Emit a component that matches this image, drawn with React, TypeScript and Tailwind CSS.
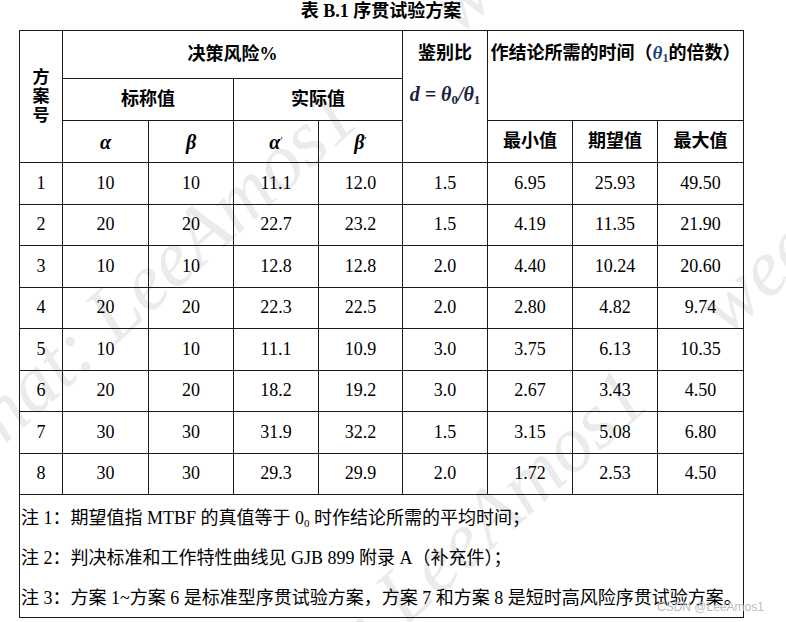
import React from 'react';

const rows = [
  ['1', '10', '10', '11.1', '12.0', '1.5', '6.95', '25.93', '49.50'],
  ['2', '20', '20', '22.7', '23.2', '1.5', '4.19', '11.35', '21.90'],
  ['3', '10', '10', '12.8', '12.8', '2.0', '4.40', '10.24', '20.60'],
  ['4', '20', '20', '22.3', '22.5', '2.0', '2.80', '4.82', '9.74'],
  ['5', '10', '10', '11.1', '10.9', '3.0', '3.75', '6.13', '10.35'],
  ['6', '20', '20', '18.2', '19.2', '3.0', '2.67', '3.43', '4.50'],
  ['7', '30', '30', '31.9', '32.2', '1.5', '3.15', '5.08', '6.80'],
  ['8', '30', '30', '29.3', '29.9', '2.0', '1.72', '2.53', '4.50'],
];

const widths = [43, 86, 85, 85, 84, 85, 85, 85, 86];

function Watermark({ left, top, gap }: { left: number; top: number; gap: number }) {
  return (
    <div
      className="absolute flex whitespace-nowrap text-[80px] leading-none italic text-[#ebebeb] origin-[0_67px] -rotate-[42deg] pointer-events-none select-none"
      style={{ left, top, gap, fontFamily: '"Liberation Serif", serif' }}
    >
      <span>wechat: LeeAmos1</span>
      <span>wechat: LeeAmos1</span>
    </div>
  );
}

export default function App() {
  const cell = 'border border-[#1a1a1a] text-center align-middle p-0';
  const head = `${cell} font-bold text-[18px]`;

  return (
    <div
      className="relative w-[786px] h-[622px] bg-white overflow-hidden text-black"
      style={{ fontFamily: '"Liberation Serif", "Noto Sans CJK SC", serif' }}
    >
      {/* watermark behind the table */}
      <Watermark left={-88} top={461} gap={128} />
      <Watermark left={202} top={743} gap={100} />

      <div className="relative z-10 ml-[19px] w-[724px]">
        <div className="h-[30px] text-center text-[18px] font-bold leading-[22px]">
          表 B.1 序贯试验方案
        </div>

        <table className="table-fixed border-collapse w-[724px]">
          <colgroup>
            {widths.map((w, i) => (
              <col key={i} style={{ width: w }} />
            ))}
          </colgroup>
          <tbody>
            <tr className="h-[48px]">
              <td rowSpan={3} className={head}>
                <div className="text-[17px] leading-[19px]">
                  <div>方</div>
                  <div>案</div>
                  <div>号</div>
                </div>
              </td>
              <td colSpan={4} className={head}>
                决策风险%
              </td>
              <td rowSpan={3} className={`${head} !align-top`}>
                <div className="pt-[12px] leading-[20px]">鉴别比</div>
                <div className="mt-[21px] leading-[20px] text-[20px] italic text-[#1a1f3a] whitespace-nowrap">
                  d = θ<sub className="not-italic text-[13px]">0</sub>/θ
                  <sub className="not-italic text-[13px]">1</sub>
                </div>
              </td>
              <td colSpan={3} rowSpan={2} className={`${head} !align-top`}>
                <div className="pt-[12px] leading-[20px] whitespace-nowrap">
                  作结论所需的时间（
                  <span className="italic text-[19px] text-[#1f3f7f]">
                    θ<sub className="not-italic text-[12px]">1</sub>
                  </span>
                  的倍数）
                </div>
              </td>
            </tr>
            <tr className="h-[42px]">
              <td colSpan={2} className={head}>
                标称值
              </td>
              <td colSpan={2} className={head}>
                实际值
              </td>
            </tr>
            <tr className="h-[42px]">
              <td className={`${head} italic !text-[20px]`}>α</td>
              <td className={`${head} italic !text-[20px]`}>β</td>
              <td className={`${head} italic !text-[20px]`}>
                α<sup className="not-italic font-normal text-[10px]">′</sup>
              </td>
              <td className={`${head} italic !text-[20px]`}>
                β<sup className="not-italic font-normal text-[10px]">′</sup>
              </td>
              <td className={head}>最小值</td>
              <td className={head}>期望值</td>
              <td className={head}>最大值</td>
            </tr>

            {rows.map((r) => (
              <tr key={r[0]} className="h-[41.5px]">
                {r.map((v, i) => (
                  <td key={i} className={`${cell} text-[18px]`}>
                    {v}
                  </td>
                ))}
              </tr>
            ))}

            <tr>
              <td colSpan={9} className="border border-[#1a1a1a] p-0 text-left">
                <div className="h-[122px] pt-[3px] pl-[1px] text-[18px] leading-[40px] whitespace-nowrap">
                  <div>
                    注 1：期望值指 MTBF 的真值等于 0<sub className="text-[11px]">0</sub> 时作结论所需的平均时间；
                  </div>
                  <div>注 2：判决标准和工作特性曲线见 GJB 899 附录 A（补充件）；</div>
                  <div>注 3：方案 1~方案 6 是标准型序贯试验方案，方案 7 和方案 8 是短时高风险序贯试验方案。</div>
                </div>
              </td>
            </tr>
          </tbody>
        </table>
      </div>

      {/* site stamp */}
      <div
        className="absolute z-20 left-[657px] top-[600px] text-[12px] leading-[14px] text-[#bdbdbd]"
        style={{ fontFamily: '"Liberation Sans", sans-serif' }}
      >
        CSDN @LeeAmos1
      </div>
    </div>
  );
}
